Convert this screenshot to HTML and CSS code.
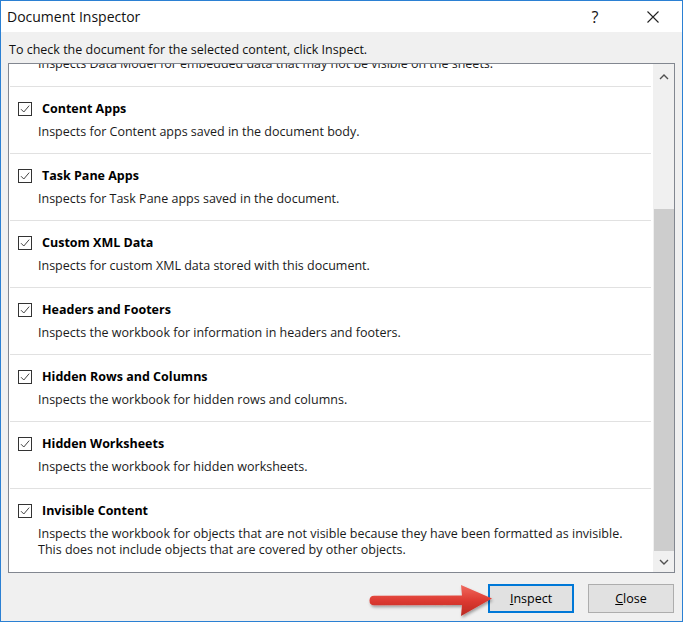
FILE: index.html
```html
<!DOCTYPE html>
<html>
<head>
<meta charset="utf-8">
<title>Document Inspector</title>
<link rel="stylesheet" href="styles.css">
</head>
<body>
<div class="window">
  <div class="titlebar">
    <div class="title">Document Inspector</div>
    <div class="tb-btn help">?</div>
    <div class="tb-btn close">
      <svg width="12" height="12" viewBox="0 0 12 12"><path d="M0.5 0.5 L11.5 11.5 M11.5 0.5 L0.5 11.5" stroke="#222" stroke-width="1.1" fill="none"/></svg>
    </div>
  </div>
  <div class="content">
    <div class="instruction">To check the document for the selected content, click Inspect.</div>
    <div class="listbox">
      <div class="items">
        <div class="partial"><div class="desc">Inspects Data Model for embedded data that may not be visible on the sheets.</div></div>
        <div class="item">
          <div class="head"><span class="cb"><svg width="12" height="12" viewBox="0 0 12 12"><path d="M2 6.2 L4.8 9 L10.2 2.6" stroke="#444" stroke-width="1" fill="none"/></svg></span><span class="name">Content Apps</span></div>
          <div class="desc">Inspects for Content apps saved in the document body.</div>
        </div>
        <div class="item">
          <div class="head"><span class="cb"><svg width="12" height="12" viewBox="0 0 12 12"><path d="M2 6.2 L4.8 9 L10.2 2.6" stroke="#444" stroke-width="1" fill="none"/></svg></span><span class="name">Task Pane Apps</span></div>
          <div class="desc">Inspects for Task Pane apps saved in the document.</div>
        </div>
        <div class="item">
          <div class="head"><span class="cb"><svg width="12" height="12" viewBox="0 0 12 12"><path d="M2 6.2 L4.8 9 L10.2 2.6" stroke="#444" stroke-width="1" fill="none"/></svg></span><span class="name">Custom XML Data</span></div>
          <div class="desc">Inspects for custom XML data stored with this document.</div>
        </div>
        <div class="item">
          <div class="head"><span class="cb"><svg width="12" height="12" viewBox="0 0 12 12"><path d="M2 6.2 L4.8 9 L10.2 2.6" stroke="#444" stroke-width="1" fill="none"/></svg></span><span class="name">Headers and Footers</span></div>
          <div class="desc">Inspects the workbook for information in headers and footers.</div>
        </div>
        <div class="item">
          <div class="head"><span class="cb"><svg width="12" height="12" viewBox="0 0 12 12"><path d="M2 6.2 L4.8 9 L10.2 2.6" stroke="#444" stroke-width="1" fill="none"/></svg></span><span class="name">Hidden Rows and Columns</span></div>
          <div class="desc">Inspects the workbook for hidden rows and columns.</div>
        </div>
        <div class="item">
          <div class="head"><span class="cb"><svg width="12" height="12" viewBox="0 0 12 12"><path d="M2 6.2 L4.8 9 L10.2 2.6" stroke="#444" stroke-width="1" fill="none"/></svg></span><span class="name">Hidden Worksheets</span></div>
          <div class="desc">Inspects the workbook for hidden worksheets.</div>
        </div>
        <div class="item last">
          <div class="head"><span class="cb"><svg width="12" height="12" viewBox="0 0 12 12"><path d="M2 6.2 L4.8 9 L10.2 2.6" stroke="#444" stroke-width="1" fill="none"/></svg></span><span class="name">Invisible Content</span></div>
          <div class="desc">Inspects the workbook for objects that are not visible because they have been formatted as invisible.<br>This does not include objects that are covered by other objects.</div>
        </div>
      </div>
      <div class="scrollbar">
        <div class="sb-btn up"><svg width="10" height="6" viewBox="0 0 10 6"><path d="M1 5 L5 1 L9 5" stroke="#505050" stroke-width="1.4" fill="none"/></svg></div>
        <div class="sb-track"><div class="sb-thumb"></div></div>
        <div class="sb-btn down"><svg width="10" height="6" viewBox="0 0 10 6"><path d="M1 1 L5 5 L9 1" stroke="#505050" stroke-width="1.4" fill="none"/></svg></div>
      </div>
    </div>
    <div class="buttons">
      <div class="btn default"><span class="ak">I</span>nspect</div>
      <div class="btn"><span class="ak">C</span>lose</div>
    </div>
  </div>
  <svg class="arrow" width="132" height="40" viewBox="0 0 132 40">
    <defs>
      <linearGradient id="ag" x1="0" y1="0" x2="0" y2="1">
        <stop offset="0" stop-color="#f06a5f"/>
        <stop offset="0.5" stop-color="#dd3a31"/>
        <stop offset="1" stop-color="#b92921"/>
      </linearGradient>
      <filter id="sh" x="-10%" y="-30%" width="130%" height="170%">
        <feDropShadow dx="1" dy="2" stdDeviation="1.4" flood-color="#000" flood-opacity="0.35"/>
      </filter>
    </defs>
    <path d="M8 13.8 L96 13.6 L95 3 L126 16.5 L95 34 L96 23 L8 23.2 Q3.5 23.2 3.5 18.5 Q3.5 13.8 8 13.8 Z" fill="url(#ag)" filter="url(#sh)"/>
  </svg>
</div>
</body>
</html>
```

FILE: styles.css
```css
html, body {
  margin: 0;
  padding: 0;
  background: #ffffff;
}

.window {
  position: relative;
  width: 683px;
  height: 622px;
  box-sizing: border-box;
  border: 1px solid #2b80d3;
  background: #f0f0f0;
  display: flex;
  flex-direction: column;
  font-family: "Open Sans", "Noto Sans", sans-serif;
  color: #000;
}

.titlebar {
  height: 31px;
  background: #ffffff;
  display: flex;
  align-items: center;
  flex-shrink: 0;
}

.title {
  flex: 1;
  padding-left: 6px;
  font-size: 14px;
  color: #111;
  line-height: 31px;
}

.tb-btn {
  width: 58px;
  height: 31px;
  display: flex;
  align-items: center;
  justify-content: center;
}

.help {
  font-size: 16px;
  font-weight: 400;
  color: #111;
}

.content {
  flex: 1;
  padding: 0 7px;
  display: flex;
  flex-direction: column;
}

.instruction {
  margin-top: 10px;
  padding-left: 1px;
  font-size: 12.5px;
  line-height: 16px;
  color: #111;
}

.listbox {
  margin-top: 5px;
  height: 510px;
  box-sizing: border-box;
  border: 1px solid #828790;
  background: #ffffff;
  display: flex;
}

.items {
  flex: 1;
  overflow: hidden;
  display: flex;
  flex-direction: column;
  padding: 0 2px 0 1px;
}

.partial {
  height: 22px;
  flex-shrink: 0;
  overflow: hidden;
}

.partial .desc {
  margin-top: -8px;
  padding-left: 28px;
}

.item {
  height: 67px;
  flex-shrink: 0;
  box-sizing: border-box;
  border-top: 1px solid #e1e1e1;
  padding-top: 13px;
}

.item.last {
  flex: 1;
  height: auto;
}

.head {
  display: flex;
  align-items: center;
  height: 18px;
  padding-left: 8px;
}

.cb {
  width: 14px;
  height: 14px;
  box-sizing: border-box;
  border: 1px solid #333333;
  background: #ffffff;
  display: flex;
  align-items: center;
  justify-content: center;
  margin-right: 10px;
}

.cb svg {
  display: block;
}

.name {
  font-size: 12.5px;
  font-weight: 700;
  color: #000;
  padding-bottom: 2px;
}

.desc {
  margin-top: 6px;
  padding-left: 28px;
  font-size: 12.5px;
  line-height: 16px;
  color: #1a1a1a;
  white-space: nowrap;
}

.scrollbar {
  width: 21px;
  flex-shrink: 0;
  background: #f0f0f0;
  display: flex;
  flex-direction: column;
}

.sb-btn {
  display: flex;
  align-items: center;
  justify-content: center;
}

.sb-btn.up {
  height: 26px;
}

.sb-btn.down {
  height: 21px;
}

.sb-track {
  flex: 1;
  padding-top: 119px;
  padding-left: 1px;
  box-sizing: border-box;
}

.sb-thumb {
  height: 342px;
  background: #cdcdcd;
}

.buttons {
  margin-top: 11px;
  display: flex;
  justify-content: flex-end;
  gap: 14px;
  padding-right: 1px;
}

.btn {
  width: 86px;
  height: 29px;
  box-sizing: border-box;
  border: 1px solid #adadad;
  background: #e1e1e1;
  display: flex;
  align-items: center;
  justify-content: center;
  font-size: 12.5px;
  color: #000;
}

.btn.default {
  border: 2px solid #0078d7;
}

.ak {
  text-decoration: underline;
}

.arrow {
  position: absolute;
  left: 365px;
  top: 581px;
}
```
